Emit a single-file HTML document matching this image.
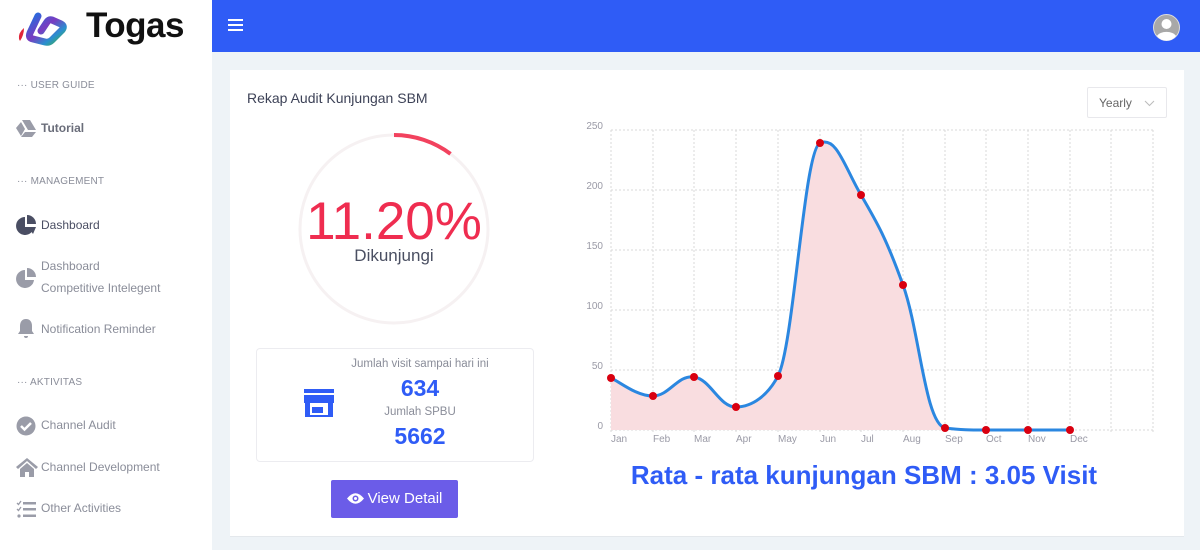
<!DOCTYPE html>
<html><head><style>
*{margin:0;padding:0;box-sizing:border-box}
body{width:1200px;height:550px;overflow:hidden;background:#eef3f7;font-family:"Liberation Sans",sans-serif;position:relative}
.sb{position:absolute;left:0;top:0;width:212px;height:550px;background:#fff}
.top{position:absolute;left:212px;top:0;width:988px;height:52px;background:#2f5cf6}
.card{position:absolute;left:230px;top:70px;width:954px;height:466px;background:#fff}
.h{position:absolute;left:17px;font-size:10px;color:#8a8d99;letter-spacing:.2px}
.it{position:absolute;left:41px;font-size:12px;color:#8a8d99}
.ic{position:absolute;left:16px}
</style></head><body>
<div class="sb">
<svg style="position:absolute;left:14px;top:6px" width="56" height="40" viewBox="0 0 56 40">
<defs><linearGradient id="g" x1="0" y1="0" x2="1" y2="1"><stop offset="0" stop-color="#1f6fe0"/><stop offset=".45" stop-color="#7a3cc0"/><stop offset=".75" stop-color="#2a8fd0"/><stop offset="1" stop-color="#3cb04a"/></linearGradient></defs>
<path d="M5 33 Q4 27 10 22 Q10 29 6 35Z" fill="#e0263a"/>
<path d="M24 10 L16 27 Q14 32 19 33 L31 36 Q35 37 38 34 L48 24 Q51 20 47 18 L38 14 Q35 13 33 16 L27 25" fill="none" stroke="url(#g)" stroke-width="7" stroke-linecap="round" stroke-linejoin="round"/>
</svg>
<div style="position:absolute;left:86px;top:6px;font-size:35px;font-weight:bold;color:#111;letter-spacing:-.5px">Togas</div>
<div class="h" style="top:80px">··· USER GUIDE</div>
<svg class="ic" style="top:120px" width="20" height="17" viewBox="0 0 20 17"><path d="M6 0h8l6 10h-8zM5 2l4 7-4 7-5-8zM9 12h11l-4 5H5z" fill="#9a9ca8"/></svg>
<div class="it" style="top:121px;color:#6a6d7a;font-weight:bold">Tutorial</div>
<div class="h" style="top:176px">··· MANAGEMENT</div>
<svg class="ic" style="top:215px" width="21" height="20" viewBox="0 0 21 20"><path d="M9 2A9 9 0 1 0 18 12H9Z" fill="#4a4e63"/><path d="M11 0A9 9 0 0 1 20 9H11Z" fill="#4a4e63"/><path d="M12 12h8l-3 7z" fill="#4a4e63"/></svg>
<div class="it" style="top:218px;color:#4a4e63">Dashboard</div>
<svg class="ic" style="top:268px" width="21" height="20" viewBox="0 0 21 20"><path d="M9 2A9 9 0 1 0 18 12H9Z" fill="#9a9ca8"/><path d="M11 0A9 9 0 0 1 20 9H11Z" fill="#9a9ca8"/></svg>
<div class="it" style="top:259px">Dashboard</div>
<div class="it" style="top:281px">Competitive Intelegent</div>
<svg class="ic" style="top:318px" width="20" height="21" viewBox="0 0 20 21"><path d="M10 1c-4 0-6 3-6 7v5l-2 3h16l-2-3V8c0-4-2-7-6-7zM8 18h4a2 2 0 0 1-4 0z" fill="#9a9ca8"/></svg>
<div class="it" style="top:322px">Notification Reminder</div>
<div class="h" style="top:377px">··· AKTIVITAS</div>
<svg class="ic" style="top:416px" width="20" height="20" viewBox="0 0 20 20"><circle cx="10" cy="10" r="9.5" fill="#9a9ca8"/><path d="M5 10l3.5 3.5L15 7" stroke="#fff" stroke-width="2.5" fill="none"/></svg>
<div class="it" style="top:418px">Channel Audit</div>
<svg class="ic" style="top:458px" width="22" height="19" viewBox="0 0 22 19"><path d="M11 0L0 9l2 2 9-8 9 8 2-2zM4 11l7-6 7 6v8h-5v-5H9v5H4z" fill="#9a9ca8"/></svg>
<div class="it" style="top:460px">Channel Development</div>
<svg class="ic" style="top:500px" width="20" height="18" viewBox="0 0 20 18"><path d="M1 3l1.5 1.5L5 1M1 9l1.5 1.5L5 7" stroke="#9a9ca8" stroke-width="1.3" fill="none"/><circle cx="3" cy="16" r="1.6" fill="#9a9ca8"/><path d="M7 2h13v2.5H7zM7 8h13v2.5H7zM7 14.5h13V17H7z" fill="#9a9ca8"/></svg>
<div class="it" style="top:501px">Other Activities</div>
</div>
<div class="top">
<div style="position:absolute;left:16px;top:19px;width:15px;height:2px;background:#fff;box-shadow:0 5px 0 #fff,0 10px 0 #fff"></div>
<svg style="position:absolute;left:941px;top:14px" width="27" height="27" viewBox="0 0 27 27"><circle cx="13.5" cy="13.5" r="13" fill="#a8a8a8" stroke="#ddd" stroke-width="1"/><circle cx="13.5" cy="10" r="5" fill="#fff"/><path d="M4 22a10 6 0 0 1 19 0a12 12 0 0 1-19 0z" fill="#fff"/></svg>
</div>
<div class="card">
<div style="position:absolute;left:17px;top:20px;font-size:14px;color:#3d4257">Rekap Audit Kunjungan SBM</div>
<div style="position:absolute;left:857px;top:17px;width:80px;height:31px;border:1px solid #e8e8ec;border-radius:2px;font-size:12px;color:#666;padding:8px 11px">Yearly<svg style="position:absolute;right:11px;top:12px" width="11" height="7"><path d="M1 1l4.5 4.5L10 1" stroke="#bbb" fill="none"/></svg></div>
<svg style="position:absolute;left:0;top:0" width="330" height="260">
<circle cx="164" cy="159" r="94" fill="none" stroke="#f6f1f2" stroke-width="3"/>
<path d="M164 65 A94 94 0 0 1 220.5 83.9" fill="none" stroke="#f2425e" stroke-width="4"/>
</svg>
<div style="position:absolute;left:44px;top:121px;width:240px;text-align:center;font-size:53px;color:#ef2d50">11.20%</div>
<div style="position:absolute;left:64px;top:176px;width:200px;text-align:center;font-size:17px;color:#4a4f62">Dikunjungi</div>
<div style="position:absolute;left:26px;top:278px;width:278px;height:114px;border:1px solid #ececf0;border-radius:4px"></div>
<svg style="position:absolute;left:73px;top:319px" width="32" height="28" viewBox="0 0 32 28"><rect x="1" y="0" width="30" height="4" fill="#2f5cf6"/><path d="M1 6h30v8H1z" fill="#2f5cf6"/><path d="M2 14h5v12h18V14h5v14H2z" fill="#2f5cf6"/><rect x="9" y="18" width="11" height="6" fill="#2f5cf6"/></svg>
<div style="position:absolute;left:110px;top:288px;width:160px;text-align:center;font-size:11.5px;color:#8a8d99">Jumlah visit sampai hari ini</div>
<div style="position:absolute;left:110px;top:305px;width:160px;text-align:center;font-size:23px;font-weight:bold;color:#2f5cf6">634</div>
<div style="position:absolute;left:110px;top:336px;width:160px;text-align:center;font-size:11.5px;color:#8a8d99">Jumlah SPBU</div>
<div style="position:absolute;left:110px;top:353px;width:160px;text-align:center;font-size:23px;font-weight:bold;color:#2f5cf6">5662</div>
<div style="position:absolute;left:101px;top:410px;width:127px;height:38px;background:#6b5ce8;border-radius:2px;color:#fff;font-size:15px;text-align:center;line-height:37px"><svg width="17" height="11" style="vertical-align:-1px;margin-right:4px" viewBox="0 0 17 11"><path d="M0 5.5Q8.5-5 17 5.5Q8.5 16 0 5.5z" fill="#fff"/><circle cx="8.5" cy="5.5" r="3" fill="#6b5ce8"/><circle cx="8.5" cy="5.5" r="1.5" fill="#fff"/></svg>View Detail</div>
<div style="position:absolute;left:400px;top:390px;width:468px;text-align:center;font-size:26px;font-weight:bold;color:#2f5cf6;white-space:nowrap">Rata - rata kunjungan SBM : 3.05 Visit</div>
</div>
<div style="position:absolute;left:230px;top:536px;width:954px;height:1px;background:#e4e8ec"></div>
<svg style="position:absolute;left:0;top:0" width="1200" height="550">
<g stroke="#d8d8d8" stroke-dasharray="2,2" stroke-width="1">
<path d="M611 130H1155M611 190H1155M611 250H1155M611 310H1155M611 370H1155M611 430H1155"/>
<path d="M611 130V432M653 130V432M694 130V432M736 130V432M778 130V432M820 130V432M861 130V432M903 130V432M945 130V432M986 130V432M1028 130V432M1070 130V432M1111 130V432M1153 130V432"/>
</g>
<g font-family="Liberation Sans" font-size="10" fill="#9a9aa6">
<text x="603" y="129" text-anchor="end">250</text><text x="603" y="189" text-anchor="end">200</text><text x="603" y="249" text-anchor="end">150</text><text x="603" y="309" text-anchor="end">100</text><text x="603" y="369" text-anchor="end">50</text><text x="603" y="429" text-anchor="end">0</text>
<text x="611" y="442">Jan</text><text x="653" y="442">Feb</text><text x="694" y="442">Mar</text><text x="736" y="442">Apr</text><text x="778" y="442">May</text><text x="820" y="442">Jun</text><text x="861" y="442">Jul</text><text x="903" y="442">Aug</text><text x="945" y="442">Sep</text><text x="986" y="442">Oct</text><text x="1028" y="442">Nov</text><text x="1070" y="442">Dec</text>
</g>
<path d="M611,378 C619.4,381.6 636.4,396.2 653,396 C669.6,395.8 677.4,374.8 694,377 C710.6,379.2 719.2,407.2 736,407 C752.8,406.8 768,395 778,376 C794,345 804,150 820,143 C836.6,136 844.4,166.6 861,195 C877.6,223.4 886.2,238.4 903,285 C919.8,331.6 925,423 945,428 C961.6,430 969.4,430 986,430 L1070,430 L611,430Z" fill="#f9dde0"/>
<path d="M611,378 C619.4,381.6 636.4,396.2 653,396 C669.6,395.8 677.4,374.8 694,377 C710.6,379.2 719.2,407.2 736,407 C752.8,406.8 768,395 778,376 C794,345 804,150 820,143 C836.6,136 844.4,166.6 861,195 C877.6,223.4 886.2,238.4 903,285 C919.8,331.6 925,423 945,428 C961.6,430 969.4,430 986,430 L1070,430" fill="none" stroke="#2b87e0" stroke-width="3"/>
<g fill="#d90010"><circle cx="611" cy="378" r="4"/><circle cx="653" cy="396" r="4"/><circle cx="694" cy="377" r="4"/><circle cx="736" cy="407" r="4"/><circle cx="778" cy="376" r="4"/><circle cx="820" cy="143" r="4"/><circle cx="861" cy="195" r="4"/><circle cx="903" cy="285" r="4"/><circle cx="945" cy="428" r="4"/><circle cx="986" cy="430" r="4"/><circle cx="1028" cy="430" r="4"/><circle cx="1070" cy="430" r="4"/></g>
</svg>
</body></html>
